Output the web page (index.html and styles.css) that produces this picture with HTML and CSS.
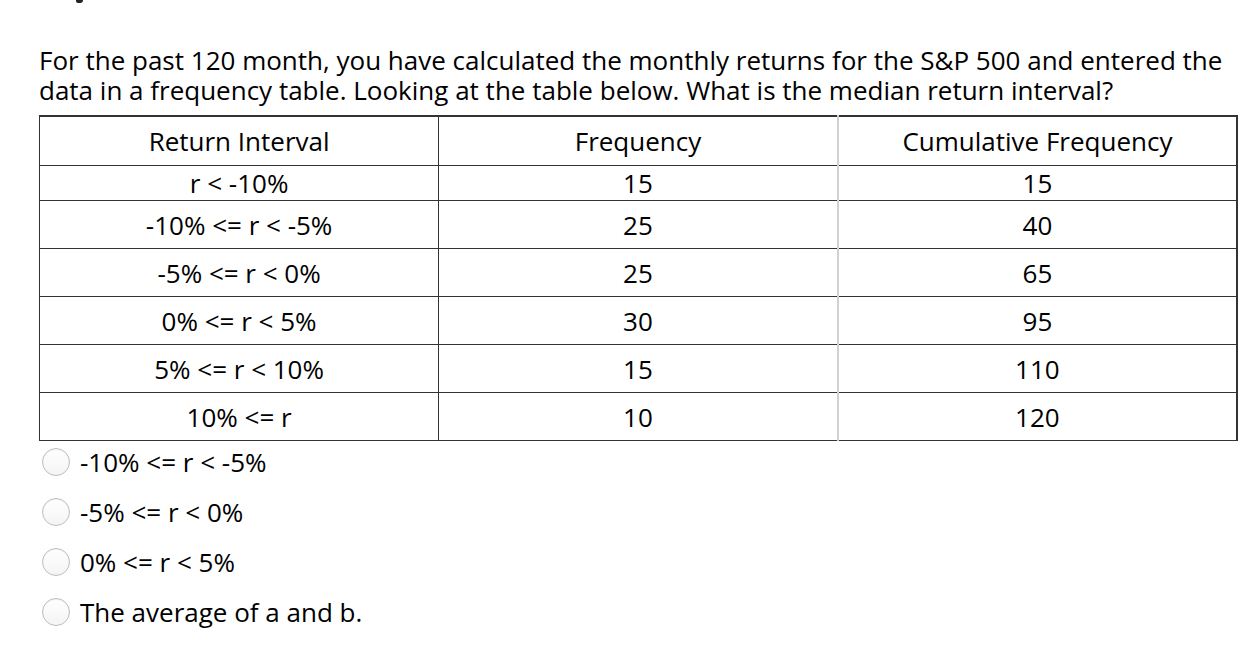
FILE: index.html
```html
<!DOCTYPE html>
<html>
<head>
<meta charset="utf-8">
<link rel="stylesheet" href="styles.css">
</head>
<body>
<div class="page">
  <div class="qtail"></div>
  <p class="question">For the past 120 month, you have calculated the monthly returns for the S&amp;P 500 and entered the data in a frequency table. Looking at the table below. What is the median return interval?</p>
  <table class="freq">
    <tr class="head"><td class="c1">Return Interval</td><td class="c2">Frequency</td><td class="c3">Cumulative Frequency</td></tr>
    <tr class="short"><td class="c1">r &lt; -10%</td><td class="c2">15</td><td class="c3">15</td></tr>
    <tr><td class="c1">-10% &lt;= r &lt; -5%</td><td class="c2">25</td><td class="c3">40</td></tr>
    <tr><td class="c1">-5% &lt;= r &lt; 0%</td><td class="c2">25</td><td class="c3">65</td></tr>
    <tr><td class="c1">0% &lt;= r &lt; 5%</td><td class="c2">30</td><td class="c3">95</td></tr>
    <tr><td class="c1">5% &lt;= r &lt; 10%</td><td class="c2">15</td><td class="c3">110</td></tr>
    <tr><td class="c1">10% &lt;= r</td><td class="c2">10</td><td class="c3">120</td></tr>
  </table>
  <ul class="options">
    <li><span class="radio"></span><span class="label">-10% &lt;= r &lt; -5%</span></li>
    <li><span class="radio"></span><span class="label">-5% &lt;= r &lt; 0%</span></li>
    <li><span class="radio"></span><span class="label">0% &lt;= r &lt; 5%</span></li>
    <li><span class="radio"></span><span class="label">The average of a and b.</span></li>
  </ul>
</div>
</body>
</html>
```
FILE: styles.css
```css
html, body {
  margin: 0;
  padding: 0;
  background: #fff;
}
body {
  font-family: "Open Sans", "DejaVu Sans", sans-serif;
  color: #000;
}
.page {
  position: relative;
  padding: 45px 0 0 39px;
  width: 1199px;
}
.qtail {
  position: absolute;
  left: 76px;
  top: 0;
  width: 7px;
  height: 3px;
  background: #222;
  border-radius: 0 0 3px 2px;
}
.question {
  margin: 0;
  font-size: 26px;
  line-height: 30px;
}
.freq {
  margin-top: 10px;
  width: 1199px;
  border-collapse: collapse;
  table-layout: fixed;
  font-size: 26px;
  border-left: 1px solid #333;
  border-right: 2px solid #333;
}
.freq td {
  text-align: center;
  vertical-align: middle;
  padding: 0;
  border-top: 1px solid #333;
  border-bottom: 1px solid #333;
  height: 47px;
  line-height: 30px;
}
.freq tr.head td {
  height: 48px;
  border-top: 2px solid #333;
}
.freq tr.short td {
  height: 34px;
}
.freq td.c1 {
  border-right: 1px solid #333;
}
.freq td.c2 {
  border-right: 2px solid #d0d0d0;
}
.options {
  list-style: none;
  margin: 0;
  padding: 0 0 0 3px;
  display: flex;
  flex-direction: column;
  gap: 8px;
}
.options li {
  display: flex;
  align-items: center;
  gap: 10px;
  height: 42px;
  font-size: 26px;
}
.radio {
  width: 26px;
  height: 26px;
  border-radius: 50%;
  border: 1px solid #bdbdbd;
  background: linear-gradient(#ffffff, #f4f4f4);
  box-shadow: inset 0 1px 1px rgba(0,0,0,0.06);
  flex: none;
}
```
